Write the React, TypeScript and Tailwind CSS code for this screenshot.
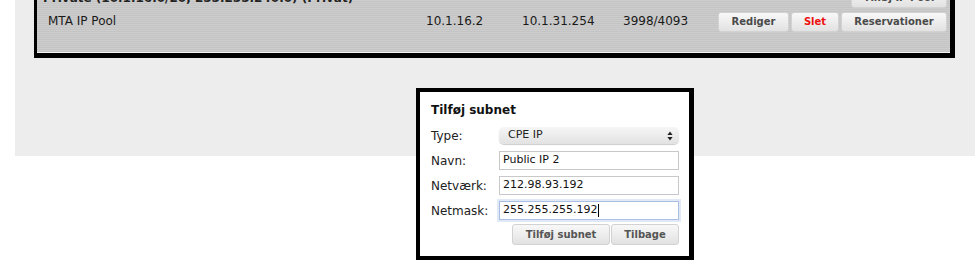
import React from "react";

const font = { fontFamily: '"DejaVu Sans", Verdana, sans-serif' };

function GrayButton({ children, className = "", red = false }: { children: React.ReactNode; className?: string; red?: boolean }) {
  return (
    <button
      className={
        "h-[20px] flex items-center justify-center rounded-[3px] border border-[#d2d2d2] bg-gradient-to-b from-[#f8f8f8] to-[#e2e2e2] text-[10px] font-bold leading-none " +
        (red ? "text-[#ee1111] " : "text-[#4a4a4a] ") +
        className
      }
    >
      {children}
    </button>
  );
}

function Field({ label, children }: { label: string; children: React.ReactNode }) {
  return (
    <div className="flex h-[25px] items-center">
      <span className="w-[68px] text-[12px] text-[#222]">{label}</span>
      {children}
    </div>
  );
}

export default function App() {
  return (
    <div className="relative h-[263px] w-[975px] overflow-hidden bg-white" style={font}>
      {/* gray page area */}
      <div className="ml-[15px] flex h-[156px] flex-col overflow-hidden bg-[#ededed]">
        {/* pools panel */}
        <div className="-mt-[21px] ml-[19px] w-[921px] border-t-[3px] border-l-[3px] border-r-[5px] border-b-[5px] border-black bg-[repeating-linear-gradient(180deg,#cdcdcd_0px,#cdcdcd_1px,#c4c4c4_1px,#c4c4c4_2px)]">
          {/* header row (cut off at the top) */}
          <div className="flex h-[28px] items-center justify-between pl-[6px] pr-[3px] pt-[3px]">
            <span className="text-[12px] font-bold text-[#222]">Private (10.1.16.0/20, 255.255.240.0) (Privat)</span>
            <GrayButton className="w-[96px]">Tilføj IP Pool</GrayButton>
          </div>

          {/* data row */}
          <div className="flex h-[24px] items-center pl-[11px] pr-[3px] text-[12px] text-[#1a1a1a]">
            <span className="w-[378px] -mt-[3px]">MTA IP Pool</span>
            <span className="w-[96px] -mt-[3px]">10.1.16.2</span>
            <span className="w-[101px] -mt-[3px]">10.1.31.254</span>
            <span className="w-[95px] -mt-[3px]">3998/4093</span>
            <div className="flex gap-[2px]">
              <GrayButton className="w-[71px]">Rediger</GrayButton>
              <GrayButton className="w-[48px]" red>Slet</GrayButton>
              <GrayButton className="w-[106px]">Reservationer</GrayButton>
            </div>
          </div>

          <div className="h-[18px]" />
          <div className="h-px bg-[#f4f4f4]" />
        </div>
      </div>

      {/* add subnet dialog */}
      <div className="absolute left-[416px] top-[88px] h-[172px] w-[278px] border-t-4 border-l-4 border-b-4 border-r-[5px] border-black bg-white pl-[11px] pt-[10px]">
        <div className="mb-[5px] h-[16px] text-[12px] font-bold leading-[16px] text-[#111]">Tilføj subnet</div>

        <Field label="Type:">
          <div className="flex h-[17px] w-[180px] items-center justify-between rounded-[5px] bg-gradient-to-b from-[#f6f6f6] to-[#e2e2e2] pl-[9px] pr-[6px] text-[11px] text-[#222] shadow-[0_1px_1px_rgba(0,0,0,0.2)]">
            <span>CPE IP</span>
            <svg width="6" height="10" viewBox="0 0 6 10">
              <path d="M3 0.5 L5.6 4 L0.4 4 Z" fill="#222" />
              <path d="M3 9.5 L5.6 6 L0.4 6 Z" fill="#222" />
            </svg>
          </div>
        </Field>

        <Field label="Navn:">
          <div className="flex h-[19px] w-[180px] items-center border border-[#c8c8c8] pl-[3px] text-[11px] text-[#111]">Public IP 2</div>
        </Field>

        <Field label="Netværk:">
          <div className="flex h-[19px] w-[180px] items-center border border-[#c8c8c8] pl-[3px] text-[11px] text-[#111]">212.98.93.192</div>
        </Field>

        <Field label="Netmask:">
          <div className="flex h-[19px] w-[180px] items-center border border-[#a9bfe3] pl-[3px] text-[11px] text-[#111] shadow-[0_0_0_2px_#e1e9f7]">
            255.255.255.192
            <span className="ml-px h-[13px] w-px bg-black" />
          </div>
        </Field>

        <div className="mt-[1px] flex w-[248px] justify-end gap-[1px]">
          <GrayButton className="h-[21px] w-[98px] text-[#555]">Tilføj subnet</GrayButton>
          <GrayButton className="h-[21px] w-[68px] text-[#555]">Tilbage</GrayButton>
        </div>
      </div>
    </div>
  );
}
